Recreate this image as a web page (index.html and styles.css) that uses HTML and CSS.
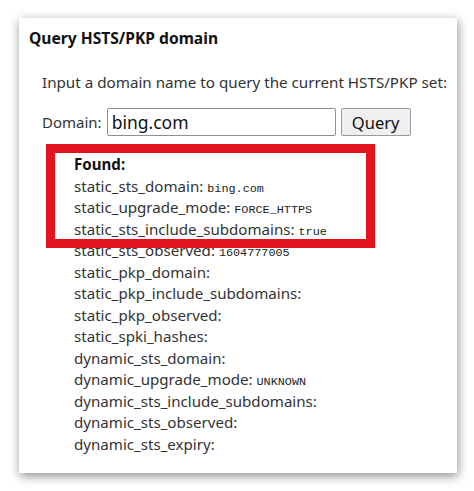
FILE: index.html
```html
<!DOCTYPE html>
<html lang="en">
<head>
  <meta charset="UTF-8">
  <title>Query HSTS/PKP domain</title>
  <link rel="stylesheet" href="styles.css">
</head>
<body>
  <div class="card">
    <h2>Query HSTS/PKP domain</h2>
    <p class="hint">Input a domain name to query the current HSTS/PKP set:</p>

    <form class="query" onsubmit="return false">
      <label for="domain">Domain:</label>
      <input id="domain" type="text" value="bing.com">
      <button type="submit">Query</button>
    </form>

    <div class="result">
      <div class="highlight"></div>
      <p class="found">Found:</p>
      <p>static_sts_domain: <code>bing.com</code></p>
      <p>static_upgrade_mode: <code>FORCE_HTTPS</code></p>
      <p>static_sts_include_subdomains: <code>true</code></p>
      <p>static_sts_observed: <code>1604777005</code></p>
      <p>static_pkp_domain:</p>
      <p>static_pkp_include_subdomains:</p>
      <p>static_pkp_observed:</p>
      <p>static_spki_hashes:</p>
      <p>dynamic_sts_domain:</p>
      <p>dynamic_upgrade_mode: <code>UNKNOWN</code></p>
      <p>dynamic_sts_include_subdomains:</p>
      <p>dynamic_sts_observed:</p>
      <p>dynamic_sts_expiry:</p>
    </div>
  </div>
</body>
</html>
```

FILE: styles.css
```css
* {
  box-sizing: border-box;
  margin: 0;
  padding: 0;
}

body {
  background-color: #fff;
  font-family: 'Noto Sans', sans-serif;
  color: #333;
}

.card {
  margin: 18px 17px 18px 19px;
  height: 455px;
  background-color: #fff;
  box-shadow: 1px 3px 10px rgba(0, 0, 0, 0.45);
  padding: 10px 10px 0 10px;
}

.card h2 {
  font-size: 15.6px;
  font-weight: bold;
  color: #111;
  line-height: 20px;
}

.hint {
  font-size: 15.2px;
  line-height: 20px;
  margin: 24px 0 0 13px;
}

.query {
  display: flex;
  align-items: center;
  margin: 16px 0 0 13px;
  font-size: 15px;
}

.query label {
  margin-right: 5px;
}

.query input {
  width: 229px;
  height: 28px;
  border: 1px solid #8f8f8f;
  border-radius: 2px;
  padding: 0 4px;
  font-family: 'Noto Sans', sans-serif;
  font-size: 17.5px;
  color: #111;
}

.query button {
  margin-left: 5px;
  width: 70px;
  height: 28px;
  border: 1px solid #999;
  border-radius: 2px;
  background-color: #efefef;
  font-family: 'Noto Sans', sans-serif;
  font-size: 16.5px;
  color: #111;
}

.result {
  position: relative;
  margin: 18px 0 0 45px;
  font-size: 15.1px;
}

.result p {
  height: 21.5px;
  line-height: 21.5px;
}

.result .found {
  font-weight: bold;
  color: #111;
}

.result code {
  font-family: 'Liberation Mono', monospace;
  font-size: 11.8px;
  line-height: 1;
  color: #222;
}

/* annotation box drawn over the first entries */
.highlight {
  position: absolute;
  left: -28px;
  top: -10px;
  width: 329px;
  height: 104px;
  border: 9px solid #e3121f;
}
```
